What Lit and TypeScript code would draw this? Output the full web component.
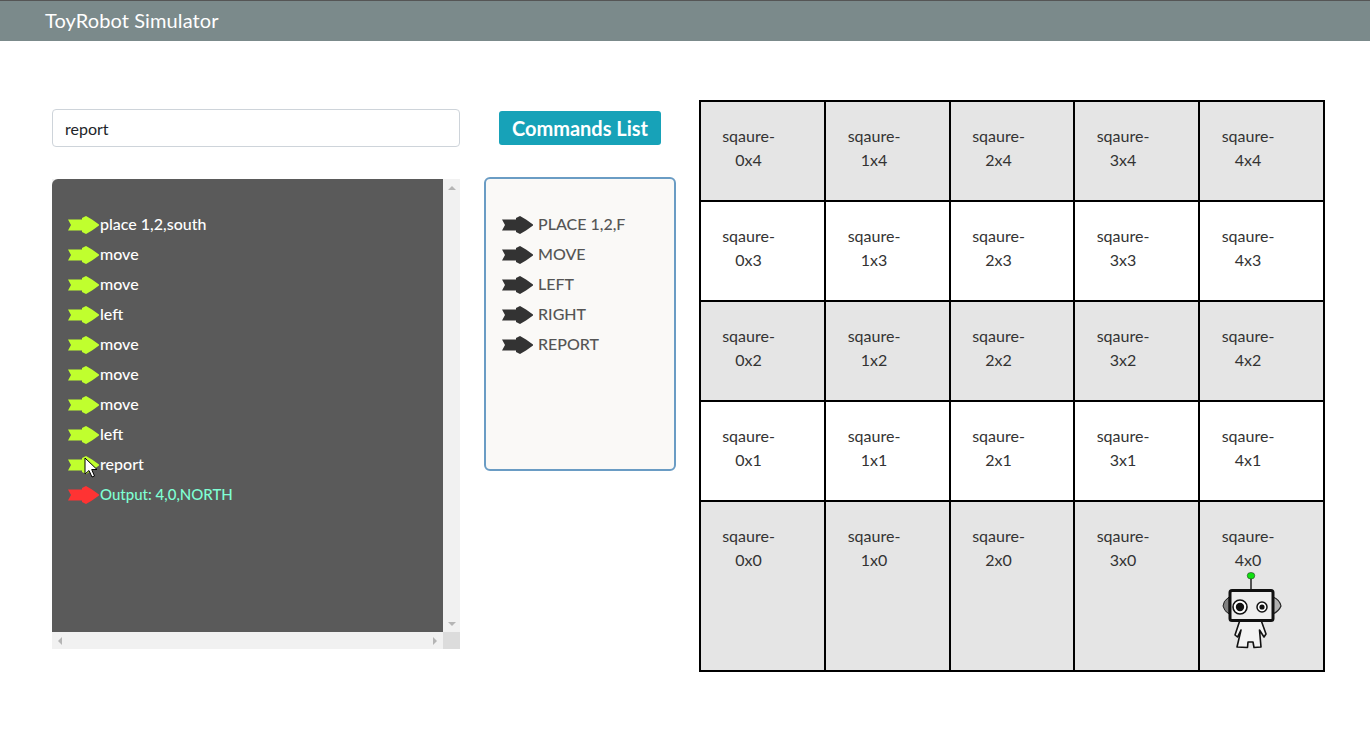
import { LitElement, html, css, svg } from "lit";
import { customElement } from "lit/decorators.js";

const arrow = (color: string) => html`<svg class="arrow" viewBox="0 0 32 18" width="32" height="18" aria-hidden="true">
  <path fill="${color}" d="M0 3.5 H14 V2 L18 0 L24 3.5 L31 8.5 V9.5 L24 14.5 L18 18 L14 16 V14.5 H0 L3 9 Z"></path>
</svg>`;

const userCmds = ["place 1,2,south", "move", "move", "left", "move", "move", "move", "left", "report"];
const cmds = ["PLACE 1,2,F", "MOVE", "LEFT", "RIGHT", "REPORT"];
const rows = [4, 3, 2, 1, 0];
const cols = [0, 1, 2, 3, 4];

const robot = html`<svg class="robot" viewBox="0 0 60 78" width="60" height="78" aria-hidden="true">
  ${svg`
  <line x1="29" y1="6" x2="29" y2="17" stroke="#222" stroke-width="1.5"></line>
  <ellipse cx="29" cy="3.7" rx="3.8" ry="3.3" fill="#10e010" stroke="#222" stroke-width=".5"></ellipse>
  <path d="M7 25 Q1 29 1 34 Q2 39 7 42 Z" fill="#808080" stroke="#222"></path>
  <path d="M51 25 Q58 28 59 34 Q57 39 51 42 Z" fill="#b0b0b0" stroke="#222" stroke-width="1.2"></path>
  <path d="M18 48 L13 63 L15.5 65 L19 58 L15 75 L25.5 75.5 L26 70 L31 70 L32 75.5 L39 75 L37.5 58 L42 65 L44 62 L39 48 Z" fill="#f3f3f3" stroke="#111" stroke-width="1.6" stroke-linejoin="round"></path>
  <rect x="8" y="18.5" width="43" height="30" rx="2" fill="#eeeeee" stroke="#111" stroke-width="3"></rect>
  <circle cx="18" cy="35" r="7" fill="#fff" stroke="#111" stroke-width="1.6"></circle>
  <circle cx="18" cy="35" r="4.2" fill="#111"></circle>
  <circle cx="40" cy="35" r="5" fill="#fff" stroke="#111" stroke-width="1.5"></circle>
  <circle cx="40" cy="35" r="2.6" fill="#111"></circle>
  `}
</svg>`;

@customElement("app-root")
export class AppRoot extends LitElement {
  static styles = css`
    :host { display: block; font-family: Lato, "Open Sans", sans-serif; color: #333; background: #fff; height: 756px; overflow: hidden; }
    * { box-sizing: border-box; }
    .bar { height: 41px; background: #7b8a8b; border-top: 1px solid #555; padding-left: 45px; color: #fff; font-size: 20px; letter-spacing: .1px; line-height: 41px; }
    .bar span { display: block; margin-top: -1px; }
    .main { display: flex; align-items: flex-start; padding: 59px 0 0 52px; }
    .left { width: 408px; padding-top: 9px; }
    .input { height: 38px; width: 100%; border: 1px solid #ced4da; border-radius: 4px; padding: 0 12px; font-size: 16px; line-height: 38px; color: #212529; }
    .terminal { position: relative; margin-top: 32px; width: 408px; height: 470px; display: grid; grid-template-columns: 391px 17px; grid-template-rows: 453px 17px; background: #f1f1f1; }
    .screen { background: #5a5a5a; border-top-left-radius: 6px; padding: 30px 16px 0; color: #fff; }
    .line { display: flex; align-items: center; height: 30px; font-size: 16px; font-weight: 500; }
    .line span { padding-bottom: 2px; }
    .line .arrow { margin-top: 2px; }
    .output { color: #7fffd4; font-size: 15px; }
    .output span { padding-bottom: 0; }
    .vbar { display: flex; flex-direction: column; justify-content: space-between; align-items: center; padding: 7px 0 6px; }
    .hbar { display: flex; justify-content: space-between; align-items: center; padding: 0 6px; }
    .corner { background: #dcdcdc; }
    .tri { width: 0; height: 0; border: 4px solid transparent; }
    .up { border-bottom-color: #b5b5b5; border-top-width: 0; }
    .down { border-top-color: #b5b5b5; border-bottom-width: 0; }
    .tl { border-right-color: #b5b5b5; border-left-width: 0; }
    .tr { border-left-color: #b5b5b5; border-right-width: 0; }
    .cursor { position: absolute; left: 32px; top: 278px; }
    .mid { width: 192px; margin-left: 24px; display: flex; flex-direction: column; align-items: center; padding-top: 11px; }
    .title { width: 162px; height: 34px; background: #17a2b8; color: #fff; border-radius: 3px; font-size: 20px; font-weight: 700; line-height: 34px; text-align: center; }
    .box { margin-top: 32px; width: 192px; height: 294px; border: 2px solid #6a9cc4; border-radius: 6px; background: #faf9f7; padding: 30px 16px 0; color: #555; }
    .box .line { gap: 4px; }
    .arrow { flex: none; }
    .grid { margin-left: 23px; width: 626px; height: 572px; display: grid; grid-template-columns: 127px 125px 124px 125px 125px; grid-template-rows: 102px 100px 100px 100px 170px; }
    .cell { border-right: 2px solid #000; border-bottom: 2px solid #000; padding: 22px 48px 0 21px; font-size: 16px; line-height: 24px; text-align: center; color: #333; }
    .cell.first { border-left: 2px solid #000; padding-left: 20px; }
    .cell.top { border-top: 2px solid #000; }
    .cell.even { background: #e5e5e5; }
    .robot { display: block; margin: 0 0 0 1px; }
  `;

  render() {
    return html`
      <div class="bar"><span>ToyRobot Simulator</span></div>
      <div class="main">
        <div class="left">
          <div class="input">report</div>
          <div class="terminal">
            <div class="screen">
              ${userCmds.map((c) => html`<div class="line">${arrow("#c0ff2e")}<span>${c}</span></div>`)}
              <div class="line output">${arrow("#ff3333")}<span>Output: 4,0,NORTH</span></div>
            </div>
            <div class="vbar"><i class="tri up"></i><i class="tri down"></i></div>
            <div class="hbar"><i class="tri tl"></i><i class="tri tr"></i></div>
            <div class="corner"></div>
            <svg class="cursor" width="14" height="22" viewBox="0 0 14 22" aria-hidden="true"><path d="M1 1 V17 L5 13.5 L8 20 L10.5 19 L7.7 12.5 H13 Z" fill="#fff" stroke="#000"></path></svg>
          </div>
        </div>
        <div class="mid">
          <div class="title">Commands List</div>
          <div class="box">
            ${cmds.map((c) => html`<div class="line">${arrow("#333")}<span>${c}</span></div>`)}
          </div>
        </div>
        <div class="grid">
          ${rows.map((r, ri) =>
            cols.map((c) => html`<div class="cell ${c === 0 ? "first" : ""} ${ri === 0 ? "top" : ""} ${ri % 2 === 0 ? "even" : ""}">
              sqaure-${c}x${r}${r === 0 && c === 4 ? robot : ""}
            </div>`)
          )}
        </div>
      </div>
    `;
  }
}
